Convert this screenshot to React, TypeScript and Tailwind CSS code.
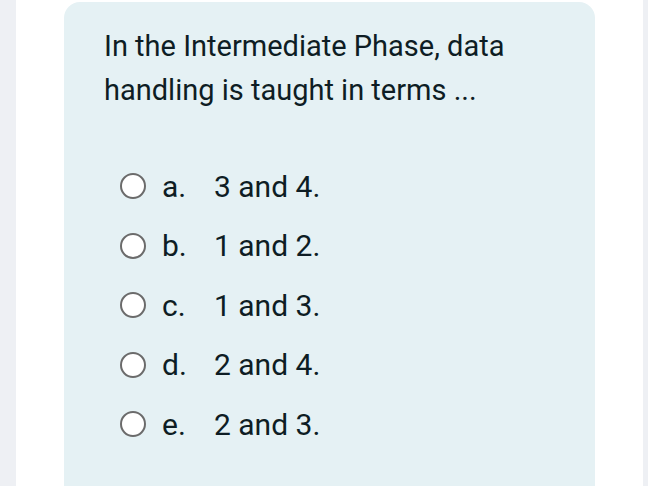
import React from 'react';

const options = [
  { key: 'a.', text: '3 and 4.' },
  { key: 'b.', text: '1 and 2.' },
  { key: 'c.', text: '1 and 3.' },
  { key: 'd.', text: '2 and 4.' },
  { key: 'e.', text: '2 and 3.' },
];

export default function App() {
  return (
    <div className="flex h-[486px] w-[648px] overflow-hidden bg-[#eef0f4] font-['Roboto',sans-serif] text-[#0e1d24]">
      <div className="ml-4 mr-[5px] flex-1 bg-white pl-12 pr-12 pt-[2px]">
        <div className="h-[500px] rounded-2xl bg-[#e5f1f4] pl-10 pr-6 pt-[22px]">
          <p className="text-[29px] leading-[44px]">
            In the Intermediate Phase, data handling is taught in terms ...
          </p>
          <div className="mt-[59px] flex flex-col gap-[29.5px] pl-[16px]">
            {options.map((o) => (
              <label key={o.key} className="flex h-[30px] items-center text-[30px]">
                <span className="h-[26px] w-[26px] shrink-0 rounded-full border-2 border-[#6b6b6b] bg-white" />
                <span className="ml-[16px] w-[52px]">{o.key}</span>
                <span>{o.text}</span>
              </label>
            ))}
          </div>
        </div>
      </div>
    </div>
  );
}
